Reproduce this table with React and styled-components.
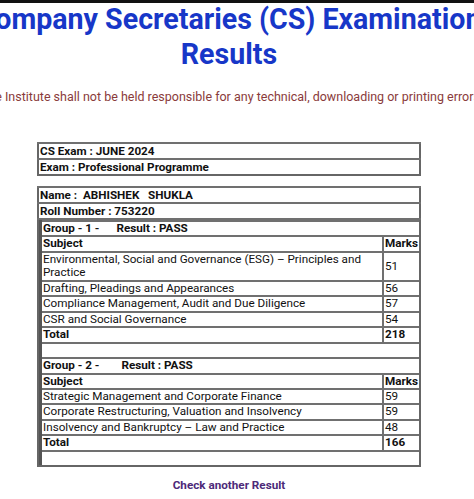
import React from 'react';
import styled, { createGlobalStyle } from 'styled-components';

const GlobalStyle = createGlobalStyle`
  html, body {
    margin: 0;
    padding: 0;
    background: #fff;
    overflow: hidden;
  }
  body {
    font-family: Roboto, "Liberation Sans", Arial, sans-serif;
  }
`;

const Page = styled.div`
  width: 474px;
  height: 499px;
  padding-right: 16px;
  box-sizing: border-box;
  overflow: hidden;
`;

const TopBar = styled.div`
  height: 3px;
  margin-right: -16px;
  background: #121212;
`;

const Heading = styled.h1`
  margin: -1px 0 0;
  display: flex;
  flex-direction: column;
  align-items: center;
  font-size: 28.6px;
  line-height: 35px;
  font-weight: 700;
  color: #1737c8;
`;

const HeadingLine = styled.span`
  white-space: nowrap;
`;

const Notice = styled.p`
  margin: 17px 0 0;
  display: flex;
  justify-content: center;
  font-size: 12.5px;
  line-height: 16px;
  color: #8a3b3b;

  span {
    white-space: nowrap;
    padding-left: 6px;
  }
`;

const Block = styled.div`
  margin: ${(p) => p.$top}px 0 0 37px;
  width: 384px;
`;

const Table = styled.table`
  width: 100%;
  border-collapse: collapse;
  border: 2px solid #666;
  font-size: 11.7px;
  color: #111;
`;

const Cell = styled.td`
  padding: 0 0 0 1px;
  line-height: ${(p) => (p.$tall ? 14 : 13.45)}px;
  border-top: 2px solid #707070;
  border-right: ${(p) => (p.$mark ? 'none' : '2px solid #707070')};
  font-weight: ${(p) => (p.$bold ? 700 : 400)};
  vertical-align: middle;
  white-space: ${(p) => (p.$wrap ? 'normal' : 'nowrap')};
`;

const MarkCell = styled(Cell)`
  width: 34px;
  border-right: none;
`;

const Holder = styled.td`
  padding: 0;
  border-top: 2px solid #707070;
`;

const GroupTable = styled(Table)`
  border-width: 1px 0 0 3px;
  border-color: #555;
`;

const Gap = styled.span`
  display: inline-block;
  width: ${(p) => p.$w}px;
`;

const LinkRow = styled.div`
  display: flex;
  justify-content: center;
  margin: 11px 0 0 0;
`;

const CheckLink = styled.a`
  font-size: 11.7px;
  font-weight: 700;
  color: #4d2a79;
  text-decoration: none;
`;

const group1 = [
  ['Environmental, Social and Governance (ESG) \u2013 Principles and Practice', 51],
  ['Drafting, Pleadings and Appearances', 56],
  ['Compliance Management, Audit and Due Diligence', 57],
  ['CSR and Social Governance', 54],
];

const group2 = [
  ['Strategic Management and Corporate Finance', 59],
  ['Corporate Restructuring, Valuation and Insolvency', 59],
  ['Insolvency and Bankruptcy \u2013 Law and Practice', 48],
];

function Group({ num, subjects, total }) {
  return (
    <>
      <tr>
        <Cell $bold colSpan={2} $mark>
          Group - {num} -<Gap $w={num === 1 ? 17 : 22} />Result : PASS
        </Cell>
      </tr>
      <tr>
        <Cell $bold>Subject</Cell>
        <MarkCell $bold>Marks</MarkCell>
      </tr>
      {subjects.map(([name, mark]) => (
        <tr key={name}>
          <Cell $wrap>{name}</Cell>
          <MarkCell>{mark}</MarkCell>
        </tr>
      ))}
      <tr>
        <Cell $bold>Total</Cell>
        <MarkCell $bold>{total}</MarkCell>
      </tr>
      <tr>
        <Cell colSpan={2} $mark>&nbsp;</Cell>
      </tr>
    </>
  );
}

export default function App() {
  return (
    <Page>
      <GlobalStyle />
      <TopBar />
      <Heading>
        <HeadingLine>Company Secretaries (CS) Examination</HeadingLine>
        <HeadingLine>Results</HeadingLine>
      </Heading>
      <Notice>
        <span>
          The Institute shall not be held responsible for any technical,
          downloading or printing errors.
        </span>
      </Notice>

      <Block $top={37}>
        <Table>
          <tbody>
            <tr>
              <Cell $bold $tall $mark>CS Exam : JUNE 2024</Cell>
            </tr>
            <tr>
              <Cell $bold $tall $mark>Exam : Professional Programme</Cell>
            </tr>
          </tbody>
        </Table>
      </Block>

      <Block $top={10}>
        <Table>
          <tbody>
            <tr>
              <Cell $bold $tall $mark>
                Name :&nbsp; ABHISHEK&nbsp;&nbsp; SHUKLA
              </Cell>
            </tr>
            <tr>
              <Cell $bold $tall $mark>Roll Number : 753220</Cell>
            </tr>
            <tr>
              <Holder>
                <GroupTable>
                  <tbody>
                    <Group num={1} subjects={group1} total={218} />
                    <Group num={2} subjects={group2} total={166} />
                  </tbody>
                </GroupTable>
              </Holder>
            </tr>
          </tbody>
        </Table>
      </Block>

      <LinkRow>
        <CheckLink href="#">Check another Result</CheckLink>
      </LinkRow>
    </Page>
  );
}
